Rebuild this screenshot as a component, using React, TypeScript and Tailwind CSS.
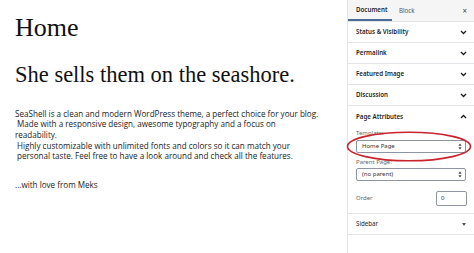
import React from 'react'

const serif = { fontFamily: '"Liberation Serif", "DejaVu Serif", serif' }

function Chevron({ up = false }: { up?: boolean }) {
  return (
    <svg width="7" height="5" viewBox="0 0 7 5" className="shrink-0">
      <polyline
        points={up ? '1,4 3.5,1.5 6,4' : '1,1 3.5,3.5 6,1'}
        fill="none"
        stroke="#1e1e1e"
        strokeWidth="1.3"
      />
    </svg>
  )
}

function UpDown() {
  return (
    <svg width="4" height="7" viewBox="0 0 4 7" className="shrink-0">
      <path d="M2 0.5 L3.6 2.8 L0.4 2.8 Z M2 6.5 L3.6 4.2 L0.4 4.2 Z" fill="#444" />
    </svg>
  )
}

function Section({ title }: { title: string }) {
  return (
    <div className="flex h-[21px] items-center justify-between border-b border-[#e2e4e7] pl-[8px] pr-[7px]">
      <span className="text-[6.2px] font-semibold text-[#1e1e1e]">{title}</span>
      <Chevron />
    </div>
  )
}

function Select({ value }: { value: string }) {
  return (
    <div className="mx-[8px] flex h-[13px] items-center justify-between rounded-[2px] border border-[#8d96a0] pl-[5px] pr-[3px]">
      <span className="text-[6px] text-[#333]">{value}</span>
      <UpDown />
    </div>
  )
}

export default function App() {
  return (
    <div className="flex h-[253px] w-[474px] overflow-hidden bg-white">
      {/* post content */}
      <main className="flex-1 pl-[15px]">
        <h1 className="mt-[15px] text-[26px] leading-none text-[#111]" style={serif}>
          Home
        </h1>
        <h2 className="mt-[23px] text-[22.5px] leading-none text-[#111]" style={serif}>
          She sells them on the seashore.
        </h2>
        <div
          className="mt-[22px] text-[8.1px] leading-[10.7px] text-[#222]"
          style={{ fontFamily: '"Open Sans", "Noto Sans", sans-serif' }}
        >
          <p>SeaShell is a clean and modern WordPress theme, a perfect choice for your blog.</p>
          <p className="pl-[2px]">Made with a responsive design, awesome typography and a focus on</p>
          <p>readability.</p>
          <p className="pl-[2px]">Highly customizable with unlimited fonts and colors so it can match your</p>
          <p className="pl-[2px]">personal taste. Feel free to have a look around and check all the features.</p>
          <p className="mt-[18px]">...with love from Meks</p>
        </div>
      </main>

      {/* settings sidebar */}
      <aside
        className="relative w-[127px] shrink-0 border-l border-[#e2e4e7]"
        style={{ fontFamily: '"Noto Sans", "Open Sans", sans-serif' }}
      >
        <div className="flex h-[22px] items-stretch justify-between border-b border-[#e2e4e7] bg-[#f5f5f5] pr-[7px]">
          <div className="flex items-stretch">
            <div className="flex w-[44px] items-center border-b-2 border-[#4c6b94] pl-[8px] text-[6.2px] font-semibold text-[#1e1e1e]">
              Document
            </div>
            <div className="flex items-center pl-[7px] text-[6.2px] text-[#555]">Block</div>
          </div>
          <span className="flex items-center text-[8px] text-[#444]">×</span>
        </div>

        <Section title="Status & Visibility" />
        <Section title="Permalink" />
        <Section title="Featured Image" />
        <Section title="Discussion" />

        <div className="border-b border-[#e2e4e7] pb-[7px]">
          <div className="flex h-[21px] items-center justify-between pl-[8px] pr-[7px]">
            <span className="text-[6.2px] font-semibold text-[#1e1e1e]">Page Attributes</span>
            <Chevron up />
          </div>
          <div className="pl-[8px] text-[6px] leading-[13px] text-[#666]">Template:</div>
          <Select value="Home Page" />
          <div className="mt-[4px] pl-[8px] text-[6px] leading-[11px] text-[#666]">Parent Page:</div>
          <Select value="(no parent)" />
          <div className="mt-[10px] flex items-center justify-between pl-[8px] pr-[7px]">
            <span className="text-[6px] text-[#666]">Order</span>
            <div className="flex h-[15px] w-[31px] items-center rounded-[2px] border border-[#8d96a0] pl-[4px] text-[6px] text-[#333]">
              0
            </div>
          </div>
        </div>

        <div className="flex h-[21px] items-center justify-between border-b border-[#e2e4e7] pl-[8px] pr-[8px]">
          <span className="text-[6.2px] text-[#1e1e1e]">Sidebar</span>
          <svg width="4" height="3" viewBox="0 0 4 3">
            <path d="M0 0 L4 0 L2 3 Z" fill="#555" />
          </svg>
        </div>

        {/* red annotation circle */}
        <svg
          className="pointer-events-none absolute left-[-2px] top-[131px]"
          width="128"
          height="32"
          viewBox="0 0 128 32"
        >
          <ellipse cx="63" cy="15.5" rx="61.5" ry="14.3" fill="none" stroke="#c9232c" strokeWidth="1.6" />
        </svg>
      </aside>
    </div>
  )
}
